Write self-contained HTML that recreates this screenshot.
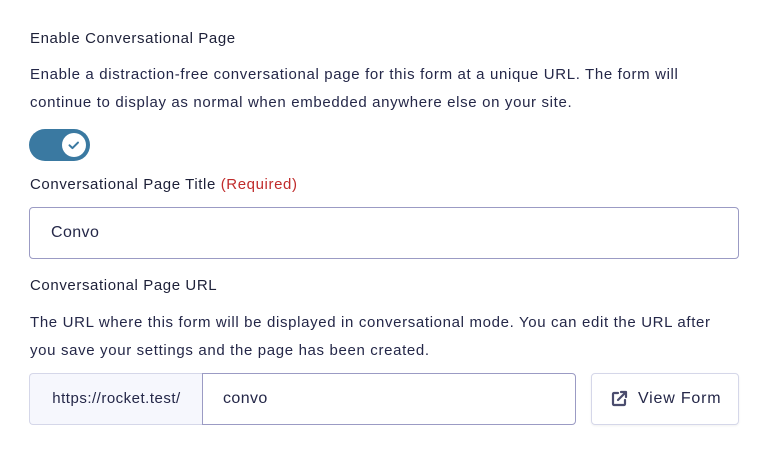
<!DOCTYPE html>
<html><head><style>
*{box-sizing:border-box;margin:0;padding:0}
body{width:768px;height:458px;background:#fff;font-family:"Liberation Sans",sans-serif;color:#242748;position:relative;overflow:hidden}
.t{position:absolute;left:30px;font-size:15px;white-space:nowrap;letter-spacing:0.6px;color:#1d2038}
.p{font-size:15px;line-height:27.5px;color:#242748;letter-spacing:0.65px}
</style></head><body>
<div class="t" style="top:30px">Enable Conversational Page</div>
<div class="t p" style="top:61px">Enable a distraction-free conversational page for this form at a unique URL. The form will<br>continue to display as normal when embedded anywhere else on your site.</div>
<div style="position:absolute;left:29px;top:129px;width:61px;height:32px;border-radius:16px;background:#3a79a1">
 <div style="position:absolute;right:4px;top:4px;width:24px;height:24px;border-radius:50%;background:#fff">
  <svg width="24" height="24" viewBox="0 0 24 24"><path d="M7.5 12.3l3 2.8 5.5-5.5" fill="none" stroke="#3a79a1" stroke-width="2" stroke-linecap="round" stroke-linejoin="round"/></svg>
 </div>
</div>
<div class="t" style="top:176px">Conversational Page Title <span style="color:#c02b2b">(Required)</span></div>
<div style="position:absolute;left:29px;top:207px;width:710px;height:52px;border:1px solid #9b9bc4;border-radius:4px;padding-left:21px;line-height:50px;font-size:16px;letter-spacing:0.4px">Convo</div>
<div class="t" style="top:277px">Conversational Page URL</div>
<div class="t p" style="top:309px">The URL where this form will be displayed in conversational mode. You can edit the URL after<br>you save your settings and the page has been created.</div>
<div style="position:absolute;left:29px;top:373px;width:174px;height:52px;border:1px solid #d5d7e9;border-right:none;border-radius:4px 0 0 4px;background:#f6f7fd;line-height:50px;text-align:center;font-size:15px;letter-spacing:0.5px">https://rocket.test/</div>
<div style="position:absolute;left:202px;top:373px;width:374px;height:52px;border:1px solid #9b9bc4;border-radius:0 4px 4px 0;padding-left:20px;line-height:50px;font-size:16px;letter-spacing:0.4px">convo</div>
<div style="position:absolute;left:591px;top:373px;width:148px;height:52px;border:1px solid #d5d7e9;border-radius:4px;line-height:50px;font-size:16px;padding-left:46px;letter-spacing:0.8px;box-shadow:0 1px 2px rgba(0,0,0,.06)">View Form
 <svg style="position:absolute;left:17px;top:15px" width="20" height="20" viewBox="0 0 20 20" fill="none" stroke="#4b4d6e" stroke-width="2.2" stroke-linecap="round" stroke-linejoin="round"><path d="M9 4H5a1 1 0 0 0-1 1v10a1 1 0 0 0 1 1h10a1 1 0 0 0 1-1v-4"/><path d="M12 3h5v5M17 3l-8 8"/></svg>
</div>
</body></html>
